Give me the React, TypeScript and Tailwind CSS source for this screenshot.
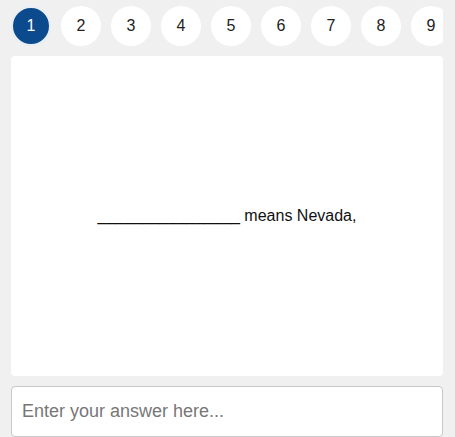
import React from "react";

export default function App() {
  const nums = [1, 2, 3, 4, 5, 6, 7, 8, 9];
  return (
    <div
      className="w-[455px] h-[437px] overflow-hidden bg-[#f0f0f0] pl-[11px] pr-[12px] pt-[6px]"
      style={{ fontFamily: '"Liberation Sans", Arial, sans-serif' }}
    >
      <div className="flex gap-[10px] overflow-hidden w-[432px]">
        {nums.map((n) => (
          <div
            key={n}
            className={
              n === 1
                ? "shrink-0 w-[40px] h-[40px] rounded-full bg-[#0b4a8c] border-2 border-[#e8eef6] text-white flex items-center justify-center text-[16px]"
                : "shrink-0 w-[40px] h-[40px] rounded-full bg-white text-[#222] flex items-center justify-center text-[16px]"
            }
          >
            {n}
          </div>
        ))}
      </div>
      <div className="mt-[10px] h-[320px] bg-white rounded-[4px] flex items-center justify-center">
        <p className="text-[16px] text-[#111] -mt-[1px]">________________ means Nevada,</p>
      </div>
      <div className="mt-[10px]">
        <input
          className="w-full h-[51px] rounded-[4px] border border-[#c8c8c8] bg-white px-[10px] text-[18px] text-[#333] placeholder:text-[#777] outline-none"
          placeholder="Enter your answer here..."
          style={{ fontFamily: '"Liberation Sans", Arial, sans-serif' }}
        />
      </div>
    </div>
  );
}
